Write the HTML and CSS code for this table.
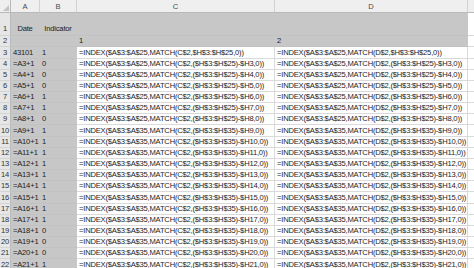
FILE: index.html
```html
<!DOCTYPE html>
<html>
<head>
<meta charset="utf-8">
<link rel="stylesheet" href="styles.css">
</head>
<body>
<div class="sheet">
  <div class="c hd corner"></div><div class="c hd">A</div><div class="c hd">B</div><div class="c hd">C</div><div class="c hd">D</div><div class="c hd"></div>

  <div class="c rn r1">1</div><div class="c s r1 ctr">Date</div><div class="c s r1 ctr">Indicator</div><div class="c s r1"></div><div class="c s r1"></div><div class="c w"></div>
  <div class="c rn">2</div><div class="c s"></div><div class="c s"></div><div class="c s">1</div><div class="c s">2</div><div class="c w"></div>

  <div class="c rn">3</div><div class="c s">43101</div><div class="c s">1</div><div class="c w">=INDEX($A$3:$A$25,MATCH(C$2,$H$3:$H$25,0))</div><div class="c w">=INDEX($A$3:$A$25,MATCH(D$2,$H$3:$H$25,0))</div><div class="c w"></div>
  <div class="c rn">4</div><div class="c s">=A3+1</div><div class="c s">0</div><div class="c w">=INDEX($A$3:$A$25,MATCH(C$2,($H$3:$H$25)-$H3,0))</div><div class="c w">=INDEX($A$3:$A$25,MATCH(D$2,($H$3:$H$25)-$H3,0))</div><div class="c w"></div>
  <div class="c rn">5</div><div class="c s">=A4+1</div><div class="c s">0</div><div class="c w">=INDEX($A$3:$A$25,MATCH(C$2,($H$3:$H$25)-$H4,0))</div><div class="c w">=INDEX($A$3:$A$25,MATCH(D$2,($H$3:$H$25)-$H4,0))</div><div class="c w"></div>
  <div class="c rn">6</div><div class="c s">=A5+1</div><div class="c s">0</div><div class="c w">=INDEX($A$3:$A$25,MATCH(C$2,($H$3:$H$25)-$H5,0))</div><div class="c w">=INDEX($A$3:$A$25,MATCH(D$2,($H$3:$H$25)-$H5,0))</div><div class="c w"></div>
  <div class="c rn">7</div><div class="c s">=A6+1</div><div class="c s">1</div><div class="c w">=INDEX($A$3:$A$25,MATCH(C$2,($H$3:$H$25)-$H6,0))</div><div class="c w">=INDEX($A$3:$A$25,MATCH(D$2,($H$3:$H$25)-$H6,0))</div><div class="c w"></div>
  <div class="c rn">8</div><div class="c s">=A7+1</div><div class="c s">1</div><div class="c w">=INDEX($A$3:$A$25,MATCH(C$2,($H$3:$H$25)-$H7,0))</div><div class="c w">=INDEX($A$3:$A$25,MATCH(D$2,($H$3:$H$25)-$H7,0))</div><div class="c w"></div>
  <div class="c rn">9</div><div class="c s">=A8+1</div><div class="c s">0</div><div class="c w">=INDEX($A$3:$A$25,MATCH(C$2,($H$3:$H$25)-$H8,0))</div><div class="c w">=INDEX($A$3:$A$25,MATCH(D$2,($H$3:$H$25)-$H8,0))</div><div class="c w"></div>
  <div class="c rn">10</div><div class="c s">=A9+1</div><div class="c s">1</div><div class="c w">=INDEX($A$3:$A$35,MATCH(C$2,($H$3:$H$35)-$H9,0))</div><div class="c w">=INDEX($A$3:$A$35,MATCH(D$2,($H$3:$H$35)-$H9,0))</div><div class="c w"></div>
  <div class="c rn">11</div><div class="c s">=A10+1</div><div class="c s">1</div><div class="c w">=INDEX($A$3:$A$35,MATCH(C$2,($H$3:$H$35)-$H10,0))</div><div class="c w">=INDEX($A$3:$A$35,MATCH(D$2,($H$3:$H$35)-$H10,0))</div><div class="c w"></div>
  <div class="c rn">12</div><div class="c s">=A11+1</div><div class="c s">1</div><div class="c w">=INDEX($A$3:$A$35,MATCH(C$2,($H$3:$H$35)-$H11,0))</div><div class="c w">=INDEX($A$3:$A$35,MATCH(D$2,($H$3:$H$35)-$H11,0))</div><div class="c w"></div>
  <div class="c rn">13</div><div class="c s">=A12+1</div><div class="c s">1</div><div class="c w">=INDEX($A$3:$A$35,MATCH(C$2,($H$3:$H$35)-$H12,0))</div><div class="c w">=INDEX($A$3:$A$35,MATCH(D$2,($H$3:$H$35)-$H12,0))</div><div class="c w"></div>
  <div class="c rn">14</div><div class="c s">=A13+1</div><div class="c s">1</div><div class="c w">=INDEX($A$3:$A$35,MATCH(C$2,($H$3:$H$35)-$H13,0))</div><div class="c w">=INDEX($A$3:$A$35,MATCH(D$2,($H$3:$H$35)-$H13,0))</div><div class="c w"></div>
  <div class="c rn">15</div><div class="c s">=A14+1</div><div class="c s">1</div><div class="c w">=INDEX($A$3:$A$35,MATCH(C$2,($H$3:$H$35)-$H14,0))</div><div class="c w">=INDEX($A$3:$A$35,MATCH(D$2,($H$3:$H$35)-$H14,0))</div><div class="c w"></div>
  <div class="c rn">16</div><div class="c s">=A15+1</div><div class="c s">1</div><div class="c w">=INDEX($A$3:$A$35,MATCH(C$2,($H$3:$H$35)-$H15,0))</div><div class="c w">=INDEX($A$3:$A$35,MATCH(D$2,($H$3:$H$35)-$H15,0))</div><div class="c w"></div>
  <div class="c rn">17</div><div class="c s">=A16+1</div><div class="c s">1</div><div class="c w">=INDEX($A$3:$A$35,MATCH(C$2,($H$3:$H$35)-$H16,0))</div><div class="c w">=INDEX($A$3:$A$35,MATCH(D$2,($H$3:$H$35)-$H16,0))</div><div class="c w"></div>
  <div class="c rn">18</div><div class="c s">=A17+1</div><div class="c s">1</div><div class="c w">=INDEX($A$3:$A$35,MATCH(C$2,($H$3:$H$35)-$H17,0))</div><div class="c w">=INDEX($A$3:$A$35,MATCH(D$2,($H$3:$H$35)-$H17,0))</div><div class="c w"></div>
  <div class="c rn">19</div><div class="c s">=A18+1</div><div class="c s">0</div><div class="c w">=INDEX($A$3:$A$35,MATCH(C$2,($H$3:$H$35)-$H18,0))</div><div class="c w">=INDEX($A$3:$A$35,MATCH(D$2,($H$3:$H$35)-$H18,0))</div><div class="c w"></div>
  <div class="c rn">20</div><div class="c s">=A19+1</div><div class="c s">0</div><div class="c w">=INDEX($A$3:$A$35,MATCH(C$2,($H$3:$H$35)-$H19,0))</div><div class="c w">=INDEX($A$3:$A$35,MATCH(D$2,($H$3:$H$35)-$H19,0))</div><div class="c w"></div>
  <div class="c rn">21</div><div class="c s">=A20+1</div><div class="c s">0</div><div class="c w">=INDEX($A$3:$A$35,MATCH(C$2,($H$3:$H$35)-$H20,0))</div><div class="c w">=INDEX($A$3:$A$35,MATCH(D$2,($H$3:$H$35)-$H20,0))</div><div class="c w"></div>
  <div class="c rn">22</div><div class="c s">=A21+1</div><div class="c s">1</div><div class="c w">=INDEX($A$3:$A$35,MATCH(C$2,($H$3:$H$35)-$H21,0))</div><div class="c w">=INDEX($A$3:$A$35,MATCH(D$2,($H$3:$H$35)-$H21,0))</div><div class="c w"></div>
</div>
</body>
</html>
```
FILE: styles.css
```css
html, body {
  margin: 0;
  padding: 0;
  background: #ffffff;
  overflow: hidden;
}

body {
  font-family: "Liberation Sans", Arial, sans-serif;
  font-size: 7.6px;
  letter-spacing: -0.2px;
  color: #1c1c1c;
}

.sheet {
  display: grid;
  grid-template-columns: 11px 29px 37px 198px 193px 20px;
  grid-template-rows: 13px 23.4px 11px repeat(20, 11.17px);
  width: 488px;
}

.c {
  box-sizing: border-box;
  display: flex;
  align-items: flex-end;
  padding: 0 2px 1px 2px;
  line-height: 9px;
  white-space: nowrap;
  overflow: hidden;
  border-right: 1px solid #dadada;
  border-bottom: 1px solid #dadada;
}

.hd {
  background: #efefef;
  color: #4a4a4a;
  justify-content: center;
  align-items: center;
  padding: 0;
  letter-spacing: 0;
  border-right-color: #d2d2d2;
  border-bottom-color: #b9b9b9;
}

.corner {
  position: relative;
  border-right-color: #b9b9b9;
}

.corner::after {
  content: "";
  position: absolute;
  right: 1px;
  bottom: 1px;
  width: 0;
  height: 0;
  border-left: 6px solid transparent;
  border-bottom: 6px solid #c4c4c4;
}

.rn {
  background: #e6e6e6;
  color: #333333;
  justify-content: center;
  padding: 0 0 1px 0;
  letter-spacing: -0.3px;
  border-right-color: #b9b9b9;
  border-bottom-color: #d4d4d4;
}

.r1 {
  padding-bottom: 2px;
}

.ctr {
  justify-content: center;
}

.s {
  background: #c7c7c7;
  border-right-color: #c7c7c7;
  border-bottom-color: #c2c2c2;
}

.w {
  background: #ffffff;
}
```
